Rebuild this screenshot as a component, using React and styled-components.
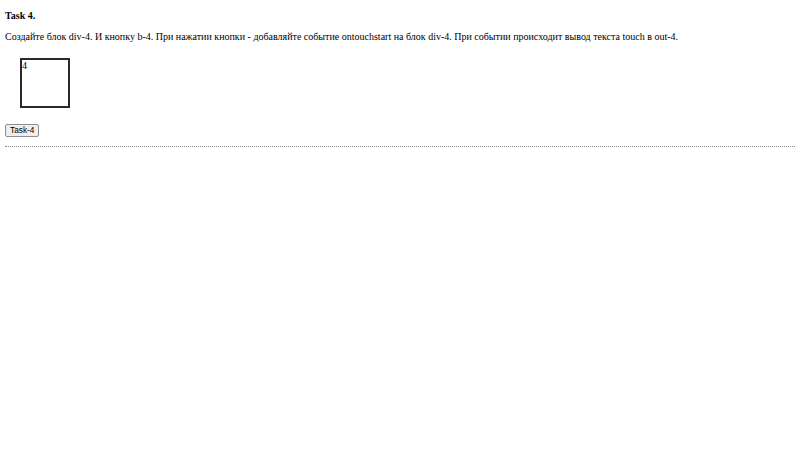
import styled, { createGlobalStyle } from 'styled-components';

const GlobalStyle = createGlobalStyle`
  html, body {
    margin: 0;
    background: #fff;
  }
  body {
    font-family: "Liberation Serif", "Times New Roman", serif;
    color: #000;
  }
`;

const Page = styled.div`
  padding: 5px;
`;

const TaskTitle = styled.h4`
  margin: 5px 0 0;
  font-size: 10px;
  line-height: 12px;
  font-weight: bold;
`;

const TaskText = styled.p`
  margin: 9px 0 0;
  font-size: 10px;
  line-height: 12px;
`;

const TouchBlock = styled.div`
  width: 46px;
  height: 46px;
  margin: 15px 0 0 15px;
  border: 2px solid #2a2a2a;
  font-size: 10px;
  line-height: 12px;
`;

const TaskButton = styled.button`
  display: block;
  margin-top: 16px;
  padding: 0 4px;
  height: 13px;
  font-family: "Liberation Sans", Arial, sans-serif;
  font-size: 8.3px;
  line-height: 11px;
  color: #000;
  background: #efefef;
  border: 1px solid #8f8f8f;
  border-radius: 2px;
`;

const Divider = styled.hr`
  margin: 9px 0 0;
  border: 0;
  border-top: 1px dotted #888;
  height: 0;
`;

export default function App() {
  return (
    <>
      <GlobalStyle />
      <Page>
        <TaskTitle>Task 4.</TaskTitle>
        <TaskText>
          Создайте блок div-4. И кнопку b-4. При нажатии кнопки - добавляйте событие ontouchstart на блок div-4. При событии происходит вывод текста touch в out-4.
        </TaskText>
        <TouchBlock>4</TouchBlock>
        <TaskButton>Task-4</TaskButton>
        <Divider />
      </Page>
    </>
  );
}
